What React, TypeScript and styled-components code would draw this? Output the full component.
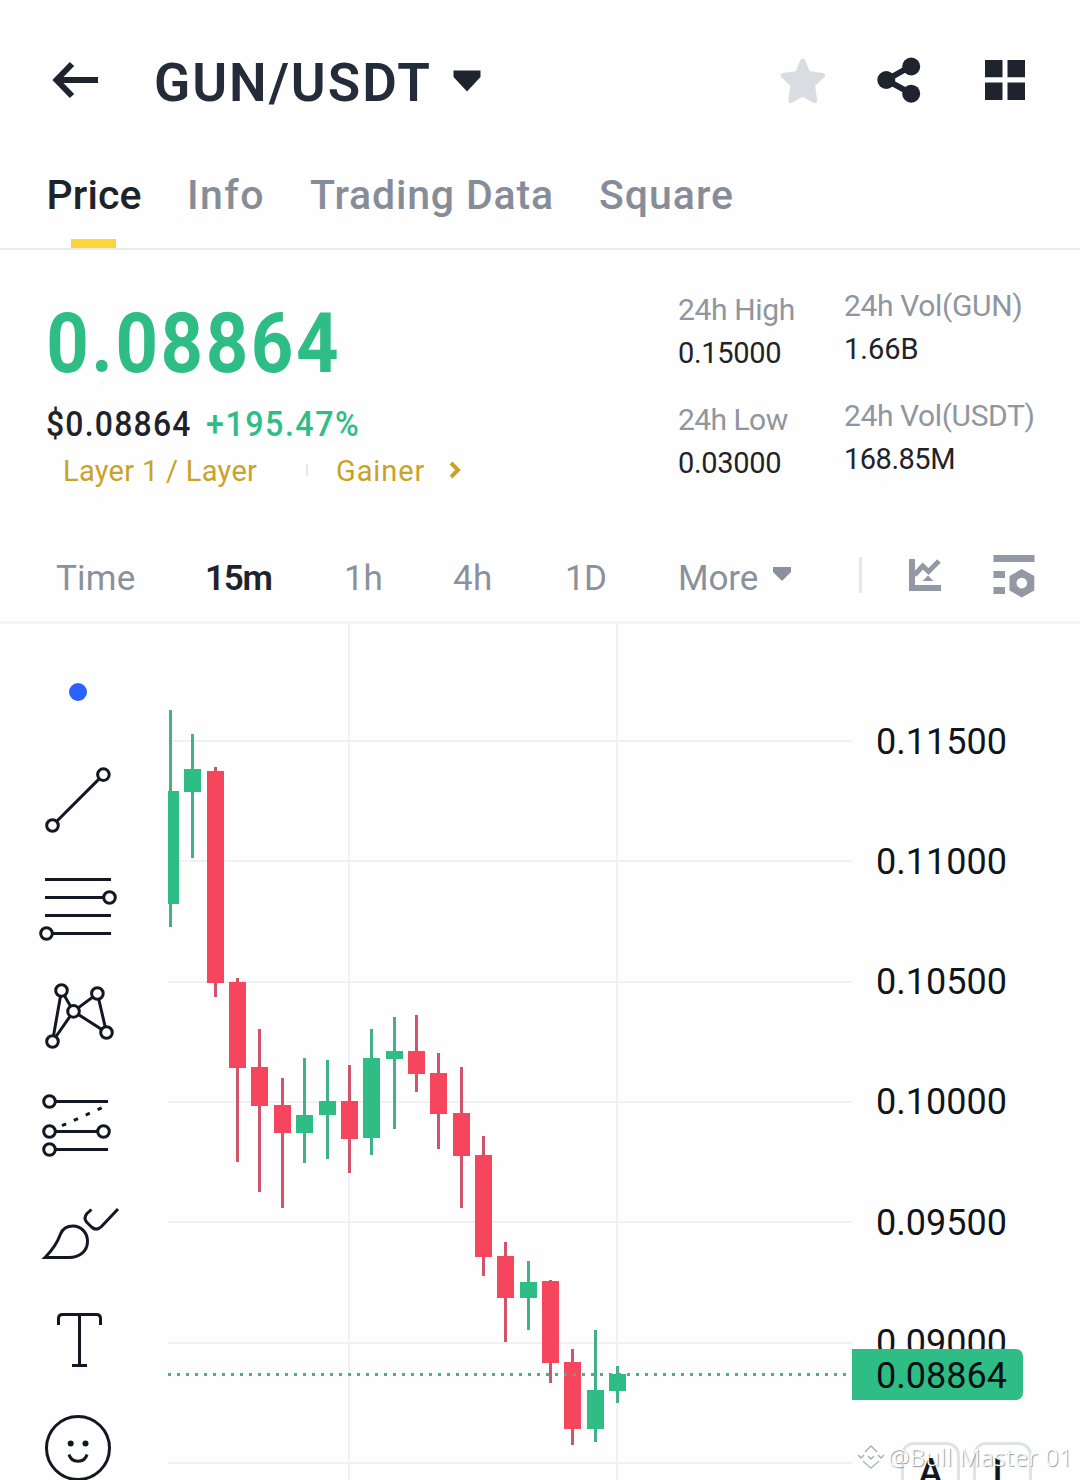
import React from "react";
import styled, { createGlobalStyle } from "styled-components";

const ink = "#1e2329";
const grey = "#868d99";
const green = "#2ebd85";
const red = "#f6465d";

const GlobalStyle = createGlobalStyle`
  * { box-sizing: border-box; }
  html, body { margin: 0; padding: 0; background: #fefefe; }
  body { overflow: hidden; }
`;

const Screen = styled.main`
  position: relative;
  width: 1080px;
  height: 1480px;
  overflow: hidden;
  display: flex;
  flex-direction: column;
  background: #fefefe;
  color: ${ink};
  font-family: Roboto, "Noto Sans", sans-serif;
  white-space: nowrap;
`;

const Header = styled.header`
  display: flex;
  align-items: center;
  height: 160px;
  padding: 0 49px 0 50px;
`;

const Title = styled.h1`
  margin: 0 0 0 54px;
  padding-top: 3px;
  width: 299px;
  font-size: 54.5px;
  line-height: 64px;
  font-weight: 600;
  letter-spacing: 2px;
  color: #252c39;
  transform: scaleX(0.976);
  transform-origin: 0 50%;
`;

const Actions = styled.div`
  display: flex;
  align-items: center;
  gap: 48px;
  margin-left: auto;
`;

const Icon = styled.svg`
  display: block;
  flex: none;
  overflow: visible;
`;

const Tabs = styled.nav`
  display: flex;
  gap: 46px;
  height: 90px;
  padding-left: 47px;
  border-bottom: 2px solid #e9eaeb;
`;

const Tab = styled.div<{ $w: number; $active?: boolean; $spacing: number }>`
  display: flex;
  flex-direction: column;
  align-items: center;
  justify-content: space-between;
  width: ${(p) => p.$w}px;
  height: 88px;
  padding-top: 11px;
  font-size: 41px;
  line-height: 48px;
  font-weight: 500;
  letter-spacing: ${(p) => p.$spacing}px;
  color: ${(p) => (p.$active ? ink : grey)};
`;

const Underline = styled.i`
  width: 45px;
  height: 9px;
  margin-right: 1px;
  background: #fbd53b;
`;

const Summary = styled.section`
  display: flex;
  height: 286px;
  padding: 40px 0 0 46px;
`;

const Quote = styled.div`
  width: 632px;
`;

const LastPrice = styled.div`
  height: 110px;
  padding-top: 9px;
  font-size: 83px;
  line-height: 90px;
  font-weight: 700;
  letter-spacing: 2.8px;
  color: ${green};
  transform: scaleX(0.895);
  transform-origin: 2px 50%;
`;

const Change = styled.div`
  display: flex;
  height: 48px;
  font-size: 34.5px;
  line-height: 49px;
  font-weight: 500;
`;

const Fiat = styled.span`
  width: 160px;
  letter-spacing: 1.3px;
  transform: scaleX(0.926);
  transform-origin: 0 50%;
`;

const Percent = styled.span`
  letter-spacing: 1.6px;
  color: ${green};
  transform: scaleX(0.935);
  transform-origin: 0 50%;
`;

const Tags = styled.div`
  display: flex;
  align-items: center;
  height: 44px;
  padding-left: 17px;
  font-size: 29px;
  font-weight: 400;
  color: #c9a227;
`;

const TagName = styled.span<{ $w: number; $spacing: number }>`
  width: ${(p) => p.$w}px;
  height: 40px;
  line-height: 42px;
  letter-spacing: ${(p) => p.$spacing}px;
`;

const Separator = styled.i<{ $h: number; $w: number }>`
  width: ${(p) => p.$w}px;
  height: ${(p) => p.$h}px;
  background: #e6e8ea;
`;

const StatColumn = styled.div<{ $w: number; $top: number }>`
  display: flex;
  flex-direction: column;
  width: ${(p) => p.$w}px;
  margin-top: ${(p) => p.$top}px;
`;

const Stat = styled.div<{ $h: number }>`
  height: ${(p) => p.$h}px;
`;

const StatLabel = styled.div<{ $spacing: number }>`
  height: 42px;
  font-size: 30px;
  line-height: 40px;
  font-weight: 400;
  letter-spacing: ${(p) => p.$spacing}px;
  color: #90969f;
`;

const StatValue = styled.div<{ $spacing: number }>`
  font-size: 29px;
  line-height: 43px;
  letter-spacing: ${(p) => p.$spacing}px;
`;

const Intervals = styled.nav`
  display: flex;
  align-items: center;
  height: 88px;
  padding-left: 56px;
  border-bottom: 3px solid #f4f5f5;
`;

const Interval = styled.span<{ $w: number; $active?: boolean; $spacing: number }>`
  width: ${(p) => p.$w}px;
  font-size: 35px;
  line-height: 44px;
  letter-spacing: ${(p) => p.$spacing}px;
  font-weight: ${(p) => (p.$active ? 600 : 400)};
  color: ${(p) => (p.$active ? ink : "#8a919c")};
`;

const IntervalTools = styled.div`
  display: flex;
  align-items: center;
  height: 44px;
  margin-bottom: 7px;
`;

const ChartArea = styled.section`
  display: flex;
  height: 856px;
  overflow: hidden;
`;

const Tools = styled.aside`
  display: flex;
  flex-direction: column;
  width: 168px;
  padding: 14px 0 0 24px;
`;

const Axis = styled.div`
  position: relative;
  display: flex;
  flex-direction: column;
  width: 228px;
  padding-top: 57.5px;
`;

const AxisLabel = styled.span`
  flex: none;
  height: 120.3px;
  padding-left: 24px;
  font-size: 36px;
  line-height: 120.3px;
  color: #10141c;
`;

const PriceTag = styled.div`
  position: absolute;
  left: 0;
  top: 725px;
  width: 171px;
  height: 51px;
  padding-left: 24px;
  border-radius: 0 7px 7px 0;
  background: ${green};
  font-size: 36px;
  line-height: 54px;
  color: #0b0e14;
`;

const ScaleButtons = styled.div`
  position: absolute;
  left: 49px;
  top: 818px;
  display: flex;
  gap: 13px;
`;

const ScaleButton = styled.div`
  width: 59px;
  height: 62px;
  padding-top: 6px;
  border: 3px solid #e0e2e6;
  border-radius: 13px;
  text-align: center;
  font-size: 36px;
  line-height: 42px;
  font-weight: 500;
  color: #12161c;
`;

const Watermark = styled.div`
  position: absolute;
  left: 857px;
  top: 1440px;
  display: flex;
  align-items: center;
  gap: 3px;
  font-family: "Noto Sans", sans-serif;
  font-size: 24px;
  line-height: 34px;
  font-weight: 300;
  letter-spacing: 0.5px;
  color: #fff;
  text-shadow: 1px 1px 1px rgba(70, 75, 85, 0.6);
`;

type Candle = [x: number, high: number, top: number, bottom: number, low: number, up: boolean];

const candles: Candle[] = [
  [162, 710, 791, 904, 927, true],
  [184, 734, 769, 792, 858, true],
  [207, 767, 771, 983, 997, false],
  [229, 978, 982, 1068, 1162, false],
  [251, 1029, 1067, 1106, 1192, false],
  [274, 1078, 1105, 1133, 1208, false],
  [296, 1058, 1115, 1133, 1163, true],
  [319, 1060, 1101, 1115, 1159, true],
  [341, 1065, 1101, 1139, 1173, false],
  [363, 1029, 1058, 1138, 1155, true],
  [386, 1017, 1051, 1059, 1129, true],
  [408, 1015, 1051, 1074, 1092, false],
  [430, 1053, 1073, 1114, 1149, false],
  [453, 1067, 1113, 1156, 1208, false],
  [475, 1136, 1155, 1257, 1276, false],
  [497, 1242, 1256, 1298, 1342, false],
  [520, 1261, 1282, 1298, 1330, true],
  [542, 1280, 1281, 1363, 1383, false],
  [564, 1349, 1362, 1429, 1445, false],
  [587, 1330, 1390, 1429, 1442, true],
  [609, 1366, 1374, 1391, 1403, true],
];

const gridRows = [740, 860, 981, 1101, 1221, 1342, 1462];

const CandleChart = () => (
  <Icon width={684} height={856} viewBox="168 624 684 856" shapeRendering="crispEdges">
    {gridRows.map((y) => (
      <rect key={y} x={168} y={y} width={684} height={2} fill="#f0f2f2" />
    ))}
    <rect x={348} y={621} width={2} height={859} fill="#eff1f2" />
    <rect x={616} y={621} width={2} height={859} fill="#eff1f2" />
    {candles.map(([x, high, top, bottom, low, up]) => {
      const left = Math.max(x, 168);
      return (
        <g key={x}>
          <rect x={x + 7} y={high} width={3} height={low - high} fill={up ? "#43b187" : "#d1546a"} />
          <rect x={left} y={top} width={x + 17 - left} height={bottom - top} fill={up ? green : red} />
        </g>
      );
    })}
    <path d="M168 1374.5H850" stroke="#4fae8a" strokeWidth={3} strokeDasharray="3 6" />
  </Icon>
);

const Dot = ({ x, y }: { x: number; y: number }) => <circle cx={x} cy={y} r={5.8} fill="#fefefe" />;

const tools: React.ReactNode[] = [
  <circle cx={78} cy={692} r={9} fill="#2962ff" stroke="none" />,
  <>
    <path d="M52.5 825.5 103.4 774.6" />
    <Dot x={52.5} y={825.5} />
    <Dot x={103.4} y={774.6} />
  </>,
  <>
    <path d="M45 879.5H111M45 897.5H109M45 915.5H111M46 933.5H111" />
    <Dot x={109.5} y={897.5} />
    <Dot x={46.5} y={933.5} />
  </>,
  <>
    <path d="M52.5 1041.5 61.5 990.5 73.5 1011.4 97.4 993.5 106.5 1032.5 73.5 1011.4Z" />
    <Dot x={61.5} y={990.5} />
    <Dot x={97.4} y={993.5} />
    <Dot x={73.5} y={1011.4} />
    <Dot x={106.5} y={1032.5} />
    <Dot x={52.5} y={1041.5} />
  </>,
  <>
    <path d="M49 1101.5H108M49 1131.5H103M49 1149.5H108" />
    <path d="M62 1125.7 104 1106.8" strokeDasharray="4.5 8.5" />
    <Dot x={49.5} y={1101.5} />
    <Dot x={49.5} y={1131.5} />
    <Dot x={103.5} y={1131.5} />
    <Dot x={49.5} y={1149.5} />
  </>,
  <>
    <path d="M45 1257.5H69C79.5 1257.5 87.5 1251 87.5 1241.5C87.5 1232.5 81 1226 73 1226C67 1226 62.5 1229 60.5 1234C56.5 1245 51.5 1251 45 1257.5Z" />
    <path d="M91.5 1209.5 87 1213.5C84.5 1216.5 84.5 1219.5 86.5 1222L91.5 1227C95 1230 98.5 1229.5 101.5 1226.5L118 1209" />
  </>,
  <path d="M58.5 1325V1318.5Q58.5 1314.5 62.5 1314.5H96.5Q100.5 1314.5 100.5 1318.5V1325M79.5 1314.5V1365M72 1365.5H87" />,
  <>
    <circle cx={78} cy={1448} r={31.5} />
    <circle cx={70.7} cy={1443.5} r={3} fill="#131722" stroke="none" />
    <circle cx={85.5} cy={1443.5} r={3} fill="#131722" stroke="none" />
    <path d="M69 1454.5C71.5 1463.5 84.5 1463.5 87 1454.5" />
  </>,
];

const App = () => (
  <>
    <GlobalStyle />
    <Screen>
      <Header>
        <Icon width={50} height={44} viewBox="50 58 50 44" fill="none" stroke="#1e232e" strokeWidth={6}>
          <path d="M98 80H56M72 64 56.5 80 72 96" />
        </Icon>
        <Title>GUN/USDT</Title>
        <Icon width={28} height={22} viewBox="453 69 28 22" fill="#1e232e">
          <path d="M453.5 70.5H480.5V77L467 91.5 453.5 77Z" />
        </Icon>
        <Actions>
          <Icon width={48} height={48} viewBox="779 56 48 48" fill="#d9dce1" stroke="#d9dce1" strokeWidth={5} strokeLinejoin="round">
            <path d="M802.7 61 808 73.5 822.5 75.5 812.5 85 814.8 100.5 802.7 94 790.8 100.5 793 85 783.2 75.5 797.5 73.5Z" />
          </Icon>
          <Icon width={48} height={48} viewBox="875 56 48 48" fill="#1e232e">
            <path d="M911.2 66 886.5 80 911.2 93.7" fill="none" stroke="#1e232e" strokeWidth={6} />
            <circle cx={886.3} cy={80} r={9} />
            <circle cx={911.2} cy={66.5} r={9} />
            <circle cx={911.2} cy={93.7} r={9} />
          </Icon>
          <Icon width={60} height={48} viewBox="971 56 60 48" fill="#1e232e">
            <path d="M985 60H1002.5V77.2H985ZM1007.5 60H1025V77.2H1007.5ZM985 82.5H1002.5V100H985ZM1007.5 82.5H1025V100H1007.5Z" />
          </Icon>
        </Actions>
      </Header>
      <Tabs>
        <Tab $w={94} $active $spacing={0.1}>
          Price
          <Underline />
        </Tab>
        <Tab $w={78} $spacing={1.5}>Info</Tab>
        <Tab $w={242} $spacing={0.85}>Trading Data</Tab>
        <Tab $w={135} $spacing={1}>Square</Tab>
      </Tabs>
      <Summary>
        <Quote>
          <LastPrice>0.08864</LastPrice>
          <Change>
            <Fiat>$0.08864</Fiat>
            <Percent>+195.47%</Percent>
          </Change>
          <Tags>
            <TagName $w={243} $spacing={0.3}>Layer 1 / Layer</TagName>
            <Separator $w={2} $h={12} />
            <TagName $w={113} $spacing={0.9} style={{ marginLeft: 28 }}>Gainer</TagName>
            <Icon width={12} height={18} viewBox="449 461 12 18" fill="none" stroke="#c9a227" strokeWidth={4}>
              <path d="M451 463 458 470 451 477" />
            </Icon>
          </Tags>
        </Quote>
        <StatColumn $w={166} $top={0}>
          <Stat $h={110}>
            <StatLabel $spacing={-0.35}>24h High</StatLabel>
            <StatValue $spacing={-0.3}>0.15000</StatValue>
          </Stat>
          <Stat $h={110}>
            <StatLabel $spacing={-0.55}>24h Low</StatLabel>
            <StatValue $spacing={-0.3}>0.03000</StatValue>
          </Stat>
        </StatColumn>
        <StatColumn $w={230} $top={-4}>
          <Stat $h={110}>
            <StatLabel $spacing={-0.35}>24h Vol(GUN)</StatLabel>
            <StatValue $spacing={0}>1.66B</StatValue>
          </Stat>
          <Stat $h={110}>
            <StatLabel $spacing={-0.4}>24h Vol(USDT)</StatLabel>
            <StatValue $spacing={-0.5}>168.85M</StatValue>
          </Stat>
        </StatColumn>
      </Summary>
      <Intervals>
        <Interval $w={149} $spacing={0.2}>Time</Interval>
        <Interval $w={139} $active $spacing={-1.2}>15m</Interval>
        <Interval $w={109} $spacing={-0.1}>1h</Interval>
        <Interval $w={112} $spacing={0.3}>4h</Interval>
        <Interval $w={113} $spacing={-0.6}>1D</Interval>
        <Interval $w={95} $spacing={-0.1}>More</Interval>
        <IntervalTools>
          <Icon width={18} height={20} viewBox="773 566 18 20" fill="#8a919d">
            <path d="M773 568H791V573L782 582 773 573Z" />
          </Icon>
          <Separator $w={3} $h={36} style={{ marginLeft: 68 }} />
          <Icon width={32} height={36} viewBox="909 557 32 36" fill="#9299a5" style={{ marginLeft: 47 }}>
            <path d="M909 559H915V585H941V591H909ZM928 575.5 933.5 581H922.5Z" />
            <path d="M914.5 575 922.7 566 928.5 571.5 939 561" fill="none" stroke="#9299a5" strokeWidth={5} />
          </Icon>
          <Icon width={42} height={44} viewBox="993 553 42 44" fill="#9299a5" style={{ marginLeft: 52 }}>
            <path d="M993.5 555H1034.5V562H993.5ZM993.5 571H1005V578H993.5ZM993.5 587H1005V594H993.5Z" />
            <path fillRule="evenodd" d="M1021.8 569 1034.3 576V590.5L1021.8 597.5 1009.5 590.5V576ZM1021.8 577.8a5.3 5.3 0 1 0 .01 0Z" />
          </Icon>
        </IntervalTools>
      </Intervals>
      <ChartArea>
        <Tools>
          {tools.map((drawing, i) => (
            <Icon key={i} width={108} height={108} viewBox={`24 ${638 + 108 * i} 108 108`} fill="none" stroke="#131722" strokeWidth={3}>
              {drawing}
            </Icon>
          ))}
        </Tools>
        <CandleChart />
        <Axis>
          {["0.11500", "0.11000", "0.10500", "0.10000", "0.09500", "0.09000"].map((v) => (
            <AxisLabel key={v}>{v}</AxisLabel>
          ))}
          <PriceTag>0.08864</PriceTag>
          <ScaleButtons>
            <ScaleButton>A</ScaleButton>
            <ScaleButton>L</ScaleButton>
          </ScaleButtons>
        </Axis>
      </ChartArea>
      <Watermark>
        <Icon width={28} height={26} viewBox="0 0 28 26" fill="none" strokeWidth={2}>
          <g stroke="#a9adb4">
            <path d="M8 8 14 2 20 8M1 11 4 14 7 11M21 11 24 14 27 11M11 12 14 15 17 12M6 17 14 24 22 17" strokeWidth={1.5} />
          </g>
          <g stroke="#fff">
            <path d="M9 10 14 5 19 10M1.5 9.5 4 7 6.5 9.5M21.5 9.5 24 7 26.5 9.5M11.5 10 14 7.5 16.5 10M7 15.5 14 22 21 15.5" />
          </g>
        </Icon>
        @Bull Master 01
      </Watermark>
    </Screen>
  </>
);

export default App;
